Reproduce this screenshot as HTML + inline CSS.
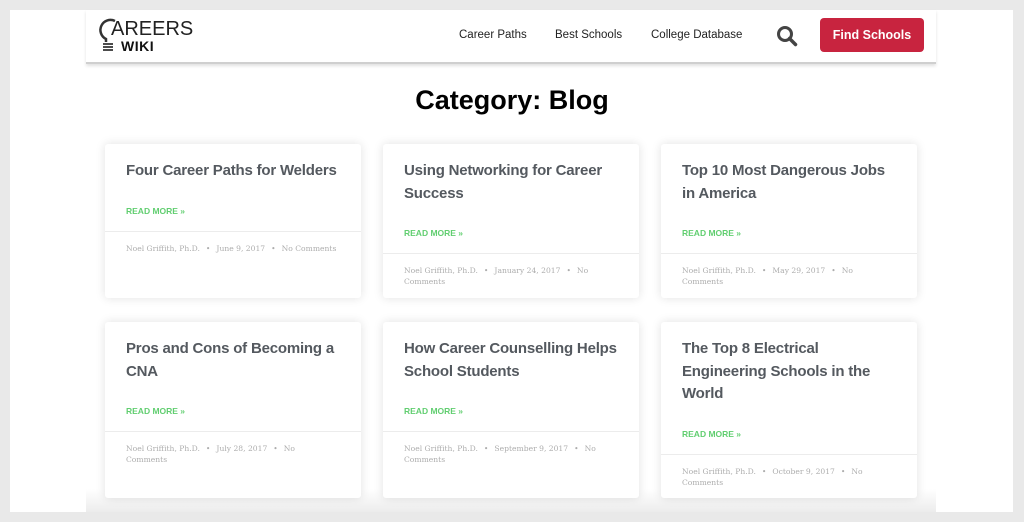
<!DOCTYPE html>
<html><head><meta charset="utf-8"><style>
*{margin:0;padding:0;box-sizing:border-box}
html,body{width:1024px;height:522px;overflow:hidden;background:#e9e9e9;font-family:"Liberation Sans",sans-serif}
.frame{position:absolute;left:10px;top:10px;width:1003px;height:502px;background:#fff}
.content{position:absolute;left:86px;top:64px;width:850px;height:448px;background:linear-gradient(#fff 0,#fff 425px,#ececec 448px)}
.hdr{position:absolute;left:86px;top:10px;width:850px;height:54px;background:#fff;border-bottom:2px solid #cfcfcf;box-shadow:0 2px 3px rgba(0,0,0,.12)}
.nav{position:absolute;top:29px;font-size:11.5px;color:#222}
.btn{position:absolute;left:820px;top:18px;width:104px;height:34px;background:#c8243f;border-radius:4px;color:#fff;font-weight:bold;font-size:12.5px;text-align:center;line-height:34px}
h1{position:absolute;left:0;width:1024px;top:85px;text-align:center;font-size:27px;font-weight:bold;color:#000}
.card{position:absolute;width:256px;background:#fff;border-radius:3px;box-shadow:0 0 10px rgba(0,0,0,.12)}
.t{padding:16px 21px 0;font-size:15px;letter-spacing:-0.2px;font-weight:bold;color:#54595f;line-height:22.5px}
.rm{padding:0 21px;margin-top:22px;font-size:8.5px;font-weight:bold;color:#61ce70;line-height:12px;height:12px}
.hr{margin-top:14px;border-top:1px solid #ececec}
.m{padding:11px 21px 0;font-family:"DejaVu Serif","Liberation Serif",serif;font-size:7.6px;color:#adadad;line-height:11px}
.m span{margin:0 6px}
</style></head><body>
<div class="frame"></div>
<div class="content"></div>
<div class="hdr">
<svg style="position:absolute;left:11px;top:6px" width="24" height="38" viewBox="0 0 24 38"><path d="M18 5 A10 10 0 1 0 9 23 L9 26" fill="none" stroke="#333" stroke-width="2.5"/><path d="M6 28h10M6 31h10M6 34h10" stroke="#333" stroke-width="1.8"/></svg>
<div style="position:absolute;left:25px;top:8px;font-size:20px;color:#222">AREERS</div>
<div style="position:absolute;left:35px;top:28px;font-size:14px;font-weight:900;color:#111;letter-spacing:0.5px">WIKI</div>
</div>
<div class="nav" style="left:459px">Career Paths</div>
<div class="nav" style="left:555px">Best Schools</div>
<div class="nav" style="left:651px">College Database</div>
<svg style="position:absolute;left:776px;top:25px" width="22" height="22" viewBox="0 0 22 22"><circle cx="9" cy="9" r="6.5" fill="none" stroke="#444" stroke-width="3"/><path d="M13.5 13.5L19.5 19.5" stroke="#444" stroke-width="3.5" stroke-linecap="round"/></svg>
<div class="btn">Find Schools</div>
<h1>Category: Blog</h1>

<div class="card" style="left:105px;top:144px;height:154px"><div class="t">Four Career Paths for Welders</div><div class="rm">READ MORE »</div><div class="hr"></div><div class="m">Noel Griffith, Ph.D.<span>•</span>June 9, 2017<span>•</span>No Comments</div></div>
<div class="card" style="left:383px;top:144px;height:154px"><div class="t">Using Networking for Career Success</div><div class="rm">READ MORE »</div><div class="hr"></div><div class="m">Noel Griffith, Ph.D.<span>•</span>January 24, 2017<span>•</span>No Comments</div></div>
<div class="card" style="left:661px;top:144px;height:154px"><div class="t">Top 10 Most Dangerous Jobs in America</div><div class="rm">READ MORE »</div><div class="hr"></div><div class="m">Noel Griffith, Ph.D.<span>•</span>May 29, 2017<span>•</span>No Comments</div></div>

<div class="card" style="left:105px;top:322px;height:176px"><div class="t">Pros and Cons of Becoming a CNA</div><div class="rm">READ MORE »</div><div class="hr"></div><div class="m">Noel Griffith, Ph.D.<span>•</span>July 28, 2017<span>•</span>No<br>Comments</div></div>
<div class="card" style="left:383px;top:322px;height:176px"><div class="t">How Career Counselling Helps School Students</div><div class="rm">READ MORE »</div><div class="hr"></div><div class="m">Noel Griffith, Ph.D.<span>•</span>September 9, 2017<span>•</span>No Comments</div></div>
<div class="card" style="left:661px;top:322px;height:176px"><div class="t">The Top 8 Electrical Engineering Schools in the World</div><div class="rm">READ MORE »</div><div class="hr"></div><div class="m">Noel Griffith, Ph.D.<span>•</span>October 9, 2017<span>•</span>No Comments</div></div>
</body></html>
